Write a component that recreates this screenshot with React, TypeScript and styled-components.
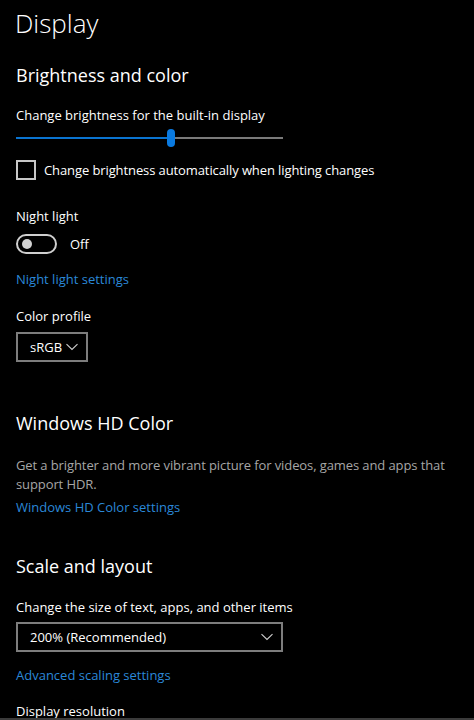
import React, { useState } from 'react';
import styled, { createGlobalStyle } from 'styled-components';

const GlobalStyle = createGlobalStyle`
  html, body {
    margin: 0;
    padding: 0;
    background: #000;
  }
  body {
    font-family: 'Open Sans', 'Noto Sans', sans-serif;
    color: #fff;
    -webkit-font-smoothing: antialiased;
  }
`;

const Screen = styled.div`
  height: 720px;
  display: flex;
  flex-direction: column;
  overflow: hidden;
  background: #000;
`;

const Content = styled.main`
  flex: 1;
  min-height: 0;
  overflow: hidden;
  padding: 0 16px;
  display: flex;
  flex-direction: column;
  align-items: flex-start;

  & > * {
    flex-shrink: 0;
  }
`;

const BottomEdge = styled.div`
  height: 2px;
  background: #3b3b3b;
`;

const PageTitle = styled.h1`
  margin: 3px 0 0 -1px;
  font-size: 26px;
  font-weight: 300;
  line-height: 40px;
`;

const SectionTitle = styled.h2<{ $gap: number }>`
  margin: ${(p) => p.$gap}px 0 0;
  font-size: 18px;
  font-weight: 400;
  line-height: 28px;
`;

const Label = styled.div<{ $gap: number }>`
  margin-top: ${(p) => p.$gap}px;
  font-size: 13px;
  line-height: 20px;
`;

const Description = styled.p`
  margin: 19px 0 0;
  max-width: 440px;
  font-size: 13px;
  line-height: 19px;
  letter-spacing: -0.1px;
  color: #a6a6a6;
`;

const SettingsLink = styled.a<{ $gap: number }>`
  margin-top: ${(p) => p.$gap}px;
  font-size: 13px;
  line-height: 20px;
  color: #2b88d8;
  text-decoration: none;
  cursor: pointer;
`;

const SliderWrap = styled.div`
  position: relative;
  margin-top: 3px;
  width: 267px;
  height: 20px;
  display: flex;
  align-items: center;
`;

const Track = styled.div`
  display: flex;
  width: 100%;
  height: 2px;
`;

const TrackFill = styled.div`
  background: #0a74d0;
`;

const TrackRest = styled.div`
  flex: 1;
  background: #7a7a7a;
`;

const Thumb = styled.div`
  position: absolute;
  top: 1px;
  width: 8px;
  height: 18px;
  border-radius: 4px;
  background: #0a7ae0;
  transform: translateX(-4px);
`;

const CheckRow = styled.label`
  margin-top: 12px;
  display: flex;
  align-items: center;
  gap: 8px;
  font-size: 13px;
  line-height: 20px;
  letter-spacing: -0.1px;
  cursor: pointer;
`;

const CheckBox = styled.span`
  box-sizing: border-box;
  width: 20px;
  height: 20px;
  border: 2px solid #c8c8c8;
`;

const ToggleRow = styled.div`
  margin-top: 8px;
  display: flex;
  align-items: center;
  gap: 13px;
  font-size: 13px;
  line-height: 20px;
`;

const Toggle = styled.button<{ $on: boolean }>`
  box-sizing: border-box;
  width: 41px;
  height: 20px;
  padding: 0 4px;
  border: 2px solid #cfcfcf;
  border-radius: 10px;
  background: ${(p) => (p.$on ? '#0a74d0' : 'transparent')};
  display: flex;
  align-items: center;
  justify-content: ${(p) => (p.$on ? 'flex-end' : 'flex-start')};
  cursor: pointer;
`;

const Knob = styled.span`
  width: 10px;
  height: 10px;
  border-radius: 50%;
  background: #d2d2d2;
`;

const Select = styled.div<{ $width: number; $gap: number }>`
  box-sizing: border-box;
  margin-top: ${(p) => p.$gap}px;
  width: ${(p) => p.$width}px;
  height: 30px;
  padding: 0 8px 0 12px;
  border: 2px solid #7d7d7d;
  display: flex;
  align-items: center;
  justify-content: space-between;
  font-size: 13px;
  cursor: pointer;
`;

const Chevron = () => (
  <svg width="12" height="8" viewBox="0 0 12 8" fill="none">
    <path d="M0.5 1.2 L6 6.5 L11.5 1.2" stroke="#cfcfcf" strokeWidth="1.1" />
  </svg>
);

function App() {
  const [brightness] = useState(58);
  const [auto, setAuto] = useState(false);
  const [night, setNight] = useState(false);

  return (
    <Screen>
      <GlobalStyle />
      <Content>
        <PageTitle>Display</PageTitle>

        <SectionTitle $gap={18}>Brightness and color</SectionTitle>
        <Label $gap={16}>Change brightness for the built-in display</Label>
        <SliderWrap>
          <Track>
            <TrackFill style={{ width: `${brightness}%` }} />
            <TrackRest />
          </Track>
          <Thumb style={{ left: `${brightness}%` }} />
        </SliderWrap>
        <CheckRow onClick={() => setAuto(!auto)}>
          <CheckBox />
          Change brightness automatically when lighting changes
        </CheckRow>

        <Label $gap={26}>Night light</Label>
        <ToggleRow>
          <Toggle $on={night} onClick={() => setNight(!night)}>
            <Knob />
          </Toggle>
          {night ? 'On' : 'Off'}
        </ToggleRow>
        <SettingsLink $gap={15}>Night light settings</SettingsLink>

        <Label $gap={17}>Color profile</Label>
        <Select $width={72} $gap={6}>
          sRGB
          <Chevron />
        </Select>

        <SectionTitle $gap={47}>Windows HD Color</SectionTitle>
        <Description>
          Get a brighter and more vibrant picture for videos, games and apps that
          support HDR.
        </Description>
        <SettingsLink $gap={3}>Windows HD Color settings</SettingsLink>

        <SectionTitle $gap={35}>Scale and layout</SectionTitle>
        <Label $gap={17}>Change the size of text, apps, and other items</Label>
        <Select $width={267} $gap={5}>
          200% (Recommended)
          <Chevron />
        </Select>
        <SettingsLink $gap={13}>Advanced scaling settings</SettingsLink>
        <Label $gap={16}>Display resolution</Label>
      </Content>
      <BottomEdge />
    </Screen>
  );
}

export default App;
